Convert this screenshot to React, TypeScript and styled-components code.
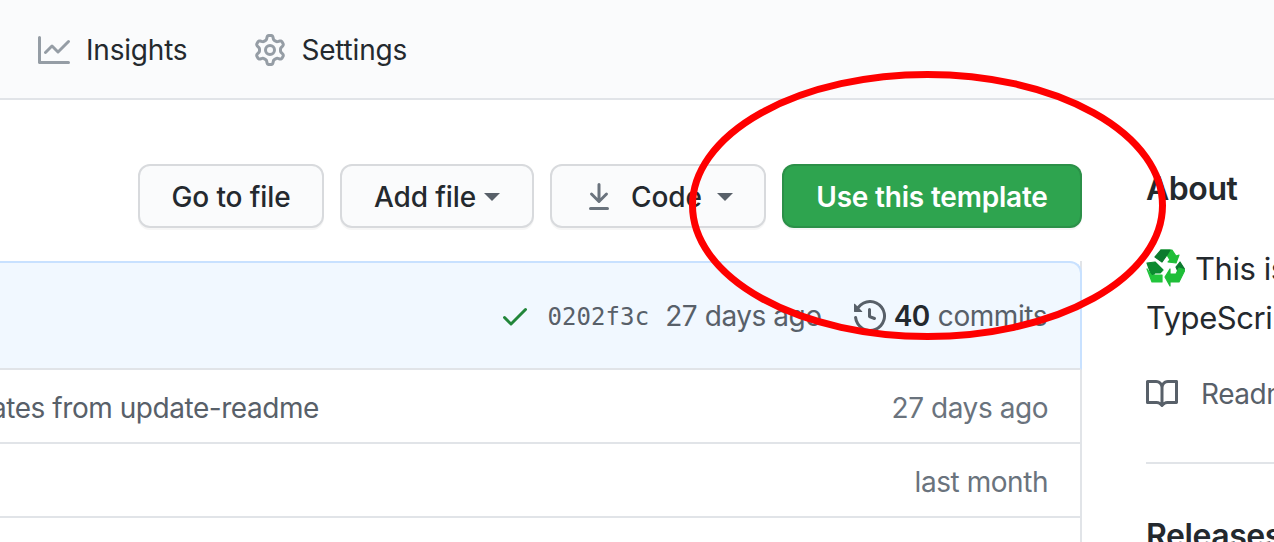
import { createGlobalStyle, styled } from 'styled-components';

const GlobalStyle = createGlobalStyle`
  html, body {
    margin: 0;
    padding: 0;
    background: #fff;
  }
  * {
    box-sizing: border-box;
  }
`;

// octicon paths, 16px grid
const ICONS = {
  graph:
    'M1.5 1.75a.75.75 0 00-1.5 0v12.5c0 .414.336.75.75.75h14.5a.75.75 0 000-1.5H1.5V1.75zm14.28 2.53a.75.75 0 00-1.06-1.06L10 7.94 7.53 5.47a.75.75 0 00-1.06 0L3.22 8.72a.75.75 0 001.06 1.06L7 7.06l2.47 2.47a.75.75 0 001.06 0l5.25-5.25z',
  gear: 'M7.429 1.525a6.593 6.593 0 011.142 0c.036.003.108.036.137.146l.289 1.105c.147.56.55.967.997 1.189.174.086.341.183.501.29.417.278.97.423 1.53.27l1.102-.303c.11-.03.175.016.195.046.219.31.41.641.573.989.014.031.022.11-.059.19l-.815.806c-.411.406-.562.957-.53 1.456a4.588 4.588 0 010 .582c-.032.499.119 1.05.53 1.456l.815.806c.08.08.073.159.059.19a6.494 6.494 0 01-.573.99c-.02.029-.086.074-.195.045l-1.103-.303c-.559-.153-1.112-.008-1.529.27-.16.107-.327.204-.5.29-.449.222-.851.628-.998 1.189l-.289 1.105c-.029.11-.101.143-.137.146a6.613 6.613 0 01-1.142 0c-.036-.003-.108-.037-.137-.146l-.289-1.105c-.147-.56-.55-.967-.997-1.189a4.502 4.502 0 01-.501-.29c-.417-.278-.97-.423-1.53-.27l-1.102.303c-.11.03-.175-.016-.195-.046a6.492 6.492 0 01-.573-.989c-.014-.031-.022-.11.059-.19l.815-.806c.411-.406.562-.957.53-1.456a4.587 4.587 0 010-.582c.032-.499-.119-1.05-.53-1.456l-.815-.806c-.08-.08-.073-.159-.059-.19a6.44 6.44 0 01.573-.99c.02-.029.086-.075.195-.045l1.103.303c.559.153 1.112.008 1.529-.27.16-.107.327-.204.5-.29.449-.222.851-.628.998-1.189l.289-1.105c.029-.11.101-.143.137-.146zM8 0c-.236 0-.47.01-.701.03-.743.065-1.29.615-1.458 1.261l-.29 1.106c-.017.066-.078.158-.211.224a5.994 5.994 0 00-.668.386c-.123.082-.233.09-.3.071L3.27 2.776c-.644-.177-1.392.02-1.82.63a7.977 7.977 0 00-.704 1.217c-.315.675-.111 1.422.363 1.891l.815.806c.05.048.098.147.088.294a6.084 6.084 0 000 .772c.01.147-.038.246-.088.294l-.815.806c-.474.469-.678 1.216-.363 1.891.2.428.436.835.704 1.218.428.609 1.176.806 1.82.63l1.103-.303c.066-.019.176-.011.299.071.213.143.436.272.668.386.133.066.194.158.212.224l.289 1.106c.169.646.715 1.196 1.458 1.26a8.094 8.094 0 001.402 0c.743-.064 1.29-.614 1.458-1.26l.29-1.106c.017-.066.078-.158.211-.224a5.98 5.98 0 00.668-.386c.123-.082.233-.09.3-.071l1.102.302c.644.177 1.392-.02 1.82-.63.268-.382.505-.789.704-1.217.315-.675.111-1.422-.364-1.891l-.814-.806c-.05-.048-.098-.147-.088-.294a6.1 6.1 0 000-.772c-.01-.147.039-.246.088-.294l.814-.806c.475-.469.679-1.216.364-1.891a7.992 7.992 0 00-.704-1.218c-.428-.609-1.176-.806-1.82-.63l-1.103.303c-.066.019-.176.011-.299-.071a5.991 5.991 0 00-.668-.386c-.133-.066-.194-.158-.212-.224L10.16 1.29C9.99.645 9.444.095 8.701.031A8.094 8.094 0 008 0zm1.5 8a1.5 1.5 0 11-3 0 1.5 1.5 0 013 0zM11 8a3 3 0 11-6 0 3 3 0 016 0z',
  download:
    'M7.47 10.78a.75.75 0 001.06 0l3.75-3.75a.75.75 0 00-1.06-1.06L8.75 8.44V1.75a.75.75 0 00-1.5 0v6.69L4.78 5.97a.75.75 0 00-1.06 1.06l3.75 3.75zM3.75 13a.75.75 0 000 1.5h8.5a.75.75 0 000-1.5h-8.5z',
  check:
    'M13.78 4.22a.75.75 0 010 1.06l-7.25 7.25a.75.75 0 01-1.06 0L2.22 9.28a.75.75 0 011.06-1.06L6 10.94l6.72-6.72a.75.75 0 011.06 0z',
  history:
    'M1.643 3.143L.427 1.927A.25.25 0 000 2.104V5.75c0 .138.112.25.25.25h3.646a.25.25 0 00.177-.427L2.715 4.215a6.5 6.5 0 11-1.18 4.458.75.75 0 10-1.493.154 8.001 8.001 0 101.6-5.684zM7.75 4a.75.75 0 01.75.75v2.992l2.028.812a.75.75 0 01-.557 1.392l-2.5-1A.75.75 0 017 8.25v-3.5A.75.75 0 017.75 4z',
  book: 'M0 1.75A.75.75 0 01.75 1h4.253c1.227 0 2.317.59 3 1.501A3.744 3.744 0 0111.006 1h4.245a.75.75 0 01.75.75v10.5a.75.75 0 01-.75.75h-4.507a2.25 2.25 0 00-1.591.659l-.622.621a.75.75 0 01-1.06 0l-.622-.621A2.25 2.25 0 005.258 13H.75a.75.75 0 01-.75-.75V1.75zm8.755 3a2.25 2.25 0 012.25-2.25H14.5v9h-3.757c-.71 0-1.4.201-1.992.572l.004-7.322zm-1.504 7.324l.004-5.073-.002-2.253A2.25 2.25 0 005.003 2.5H1.5v9h3.757a3.75 3.75 0 011.994.574z',
};

const IconSvg = styled.svg<{ $color: string; $before?: number; $after?: number }>`
  flex: none;
  margin-left: ${({ $before }) => $before ?? 0}px;
  margin-right: ${({ $after }) => $after ?? 0}px;
  color: ${({ $color }) => $color};
`;

type OcticonProps = {
  name: keyof typeof ICONS;
  color: string;
  before?: number;
  after?: number;
};

function Octicon({ name, color, before, after }: OcticonProps) {
  return (
    <IconSvg width="32" height="32" viewBox="0 0 16 16" $color={color} $before={before} $after={after}>
      <path fillRule="evenodd" fill="currentColor" d={ICONS[name]} />
    </IconSvg>
  );
}

const Page = styled.div`
  position: relative;
  width: 1274px;
  height: 542px;
  overflow: hidden;
  background: #fff;
  color: #24292e;
  font-family: Inter, 'Liberation Sans', sans-serif;
  font-size: 28px;
  letter-spacing: -0.45px;
`;

const TabBar = styled.nav`
  display: flex;
  align-items: center;
  gap: 67px;
  height: 100px;
  padding: 2px 0 0 38px;
  background: #fafbfc;
  border-bottom: 2px solid #e1e4e8;
`;

const Tab = styled.a`
  display: flex;
  align-items: center;
  gap: 15px;
  color: #24292e;
  letter-spacing: -0.2px;

  &:first-child {
    gap: 16px;
  }
`;

const Body = styled.div`
  display: flex;
`;

const Main = styled.main`
  flex: none;
  width: 1082px;
  padding-top: 64px;
`;

const Actions = styled.div`
  display: flex;
  justify-content: flex-end;
  gap: 16px;
`;

const Button = styled.button<{ $width: number; $primary?: boolean }>`
  display: flex;
  align-items: center;
  justify-content: center;
  width: ${({ $width }) => $width}px;
  height: 64px;
  padding: 2px 0 0;
  border: 2px solid ${({ $primary }) => ($primary ? 'rgba(27, 31, 35, 0.15)' : '#d8dadd')};
  border-radius: 12px;
  background: ${({ $primary }) => ($primary ? '#2ea44f' : '#fafbfc')};
  box-shadow: 0 2px 0 rgba(27, 31, 35, 0.04);
  color: ${({ $primary }) => ($primary ? '#fff' : '#24292e')};
  font: inherit;
  font-weight: ${({ $primary }) => ($primary ? 600 : 500)};
  letter-spacing: ${({ $primary }) => ($primary ? '-0.2px' : '-0.1px')};
  white-space: nowrap;
`;

const Caret = styled.span<{ $gap: number }>`
  width: 0;
  height: 0;
  margin-left: ${({ $gap }) => $gap}px;
  border-top: 8px solid #586069;
  border-left: 8px solid transparent;
  border-right: 8px solid transparent;
`;

const FileTable = styled.section`
  margin-top: 33px;
  border-right: 2px solid #e1e4e8;
`;

const CommitBar = styled.div`
  display: flex;
  align-items: center;
  justify-content: flex-end;
  height: 109px;
  margin-right: -2px;
  padding-right: 33px;
  background: #f1f8ff;
  border: 2px solid #c8e1ff;
  border-left: 0;
  border-bottom-color: #e1e4e8;
  border-top-right-radius: 12px;
  color: #586069;
`;

const Sha = styled.code`
  margin-right: 16px;
  padding-top: 2px;
  font-family: 'DejaVu Sans Mono', monospace;
  font-size: 24px;
  letter-spacing: 0.1px;
`;

const Count = styled.strong`
  margin-right: 8px;
  color: #24292e;
  font-weight: 600;
`;

const FileRow = styled.div`
  display: flex;
  align-items: center;
  justify-content: space-between;
  height: 74px;
  padding: 4px 32px 0 0;
  border-bottom: 2px solid #e1e4e8;
  color: #586069;
`;

const CommitMessage = styled.span`
  margin-left: -9px;
  white-space: nowrap;
`;

const RowAge = styled.span`
  margin-left: auto;
  color: #6a737d;
`;

const Sidebar = styled.aside`
  flex: none;
  width: 300px;
  margin-left: 64px;
  padding-top: 69px;
  white-space: nowrap;
`;

const SectionTitle = styled.h2`
  margin: 0;
  font-size: 32px;
  font-weight: 600;
  line-height: 40px;
`;

const Description = styled.p`
  margin: 35px 0 0;
  font-size: 31px;
  line-height: 49px;
`;

const Recycle = styled.svg`
  margin-right: 10px;
  vertical-align: -7px;

  path {
    stroke-width: 1.2;
    stroke-linejoin: round;
  }
`;

const ReadmeLink = styled.a`
  display: flex;
  align-items: center;
  gap: 23px;
  margin-top: 35px;
  color: #586069;
`;

const Rule = styled.hr`
  height: 2px;
  margin: 51px 0 52px;
  border: 0;
  background: #e1e4e8;
`;

const Annotation = styled.svg`
  position: absolute;
  top: 0;
  left: 0;
  pointer-events: none;
`;

export default function App() {
  return (
    <Page>
      <GlobalStyle />
      <TabBar>
        <Tab>
          <Octicon name="graph" color="#959da5" />
          Insights
        </Tab>
        <Tab>
          <Octicon name="gear" color="#959da5" />
          Settings
        </Tab>
      </TabBar>
      <Body>
        <Main>
          <Actions>
            <Button $width={186}>Go to file</Button>
            <Button $width={194}>
              Add file
              <Caret $gap={8} />
            </Button>
            <Button $width={216}>
              <Octicon name="download" color="#6a737d" after={16} />
              Code
              <Caret $gap={15} />
            </Button>
            <Button $width={300} $primary>
              Use this template
            </Button>
          </Actions>
          <FileTable>
            <CommitBar>
              <Octicon name="check" color="#22863a" after={16} />
              <Sha>0202f3c</Sha>
              27 days ago
              <Octicon name="history" color="#586069" before={32} after={8} />
              <Count>40</Count>
              commits
            </CommitBar>
            <FileRow>
              <CommitMessage>ates from update-readme</CommitMessage>
              <RowAge>27 days ago</RowAge>
            </FileRow>
            <FileRow>
              <RowAge>last month</RowAge>
            </FileRow>
            <FileRow />
          </FileTable>
        </Main>
        <Sidebar>
          <SectionTitle>About</SectionTitle>
          <Description>
            <Recycle width="39" height="38" viewBox="0 0 39 38">
              <path d="M15 1h11l4 6 3-1-3 8-8-1 2-2-3-5h-3z" fill="#1fbe38" stroke="#1fbe38" />
              <path d="M15 1L9 8l7 5 5-7 3-5z" fill="#0b7a2e" stroke="#0b7a2e" />
              <path d="M1 14l8-1 8 8-3 3h-5l-3 4z" fill="#0c8a30" stroke="#0c8a30" />
              <path d="M1 20l5 13h10v-7H8l-2 1z" fill="#22c53c" stroke="#22c53c" />
              <path d="M34 13l5 8-6 4-3-7z" fill="#0b7a2e" stroke="#0b7a2e" />
              <path d="M19 28l5-8v5h6l3-6 6 2-6 12h-9v4z" fill="#1fbe38" stroke="#1fbe38" />
            </Recycle>
            This is a template
            <br />
            TypeScript
          </Description>
          <ReadmeLink>
            <Octicon name="book" color="#586069" />
            Readme
          </ReadmeLink>
          <Rule />
          <SectionTitle>Releases</SectionTitle>
        </Sidebar>
      </Body>
      <Annotation width="1274" height="542" viewBox="0 0 1274 542">
        <ellipse cx="927.5" cy="205.5" rx="235" ry="131" fill="none" stroke="#fe0000" strokeWidth="7" />
      </Annotation>
    </Page>
  );
}
